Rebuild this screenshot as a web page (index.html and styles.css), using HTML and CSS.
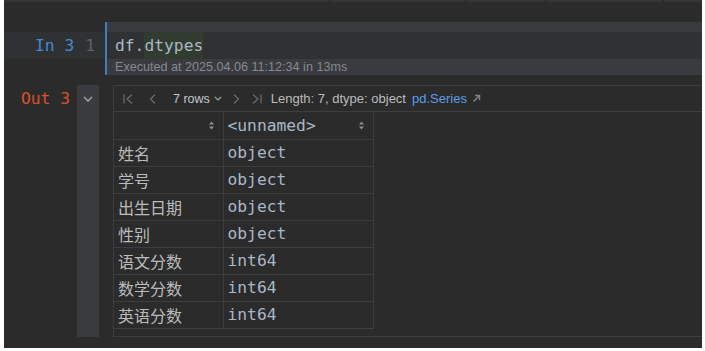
FILE: index.html
```html
<!DOCTYPE html>
<html lang="en">
<head>
    <meta charset="UTF-8">
    <title>df.dtypes</title>
    <link rel="stylesheet" href="styles.css">
</head>
<body>
<div class="frame">

    <!-- tail of the previous cell -->
    <div class="prev">
        <span class="seg" style="width: 326px"></span>
        <span class="seg" style="width: 136px"></span>
        <span class="seg" style="width: 80px"></span>
        <span class="seg" style="width: 118px"></span>
        <span class="seg last"></span>
    </div>

    <!-- input cell -->
    <div class="cell-in">
        <div class="gutter">
            <span class="prompt-in">In 3</span>
            <span class="line-no">1</span>
        </div>
        <div class="bar"></div>
        <div class="band"></div>
        <div class="code">df.<span class="hl">dtypes</span></div>
        <div class="exec">Executed at 2025.04.06 11:12:34 in 13ms</div>
    </div>

    <!-- output cell -->
    <div class="cell-out">
        <div class="prompt-out">Out 3</div>
        <div class="toggle">
            <svg width="10" height="6" viewBox="0 0 10 6"><path d="M1 1 L5 5 L9 1" fill="none" stroke="#a7a9ad" stroke-width="1.3"/></svg>
        </div>
        <div class="result">
            <div class="toolbar">
                <svg class="ico first" width="12" height="12" viewBox="0 0 12 12"><path d="M2 1.5 V10.5 M10 1.5 L5 6 L10 10.5" fill="none" stroke="#6a6d72" stroke-width="1.2"/></svg>
                <svg class="ico prev-p" width="12" height="12" viewBox="0 0 12 12"><path d="M8 1.5 L3.5 6 L8 10.5" fill="none" stroke="#6a6d72" stroke-width="1.2"/></svg>
                <span class="rows">7 rows
                    <svg width="8" height="5" viewBox="0 0 8 5"><path d="M0.8 0.8 L4 4 L7.2 0.8" fill="none" stroke="#a7a9ad" stroke-width="1.2"/></svg>
                </span>
                <svg class="ico next-p" width="12" height="12" viewBox="0 0 12 12"><path d="M4 1.5 L8.5 6 L4 10.5" fill="none" stroke="#6a6d72" stroke-width="1.2"/></svg>
                <svg class="ico last-p" width="12" height="12" viewBox="0 0 12 12"><path d="M2 1.5 L7 6 L2 10.5 M10 1.5 V10.5" fill="none" stroke="#6a6d72" stroke-width="1.2"/></svg>
                <span class="meta">Length: 7, dtype: object</span>
                <span class="link">pd.Series</span>
                <svg width="9" height="9" viewBox="0 0 9 9"><path d="M1.5 7.5 L7 2 M3 1.5 H7.5 V6" fill="none" stroke="#7c7f84" stroke-width="1.5"/></svg>
            </div>

            <table class="grid">
                <thead>
                    <tr>
                        <th class="idx">
                            <svg class="sort" width="5" height="9" viewBox="0 0 5 9"><path d="M0 3.5 L2.5 0.5 L5 3.5 Z M0 5.5 L2.5 8.5 L5 5.5 Z" fill="#8d9094"/></svg>
                        </th>
                        <th class="val">&lt;unnamed&gt;
                            <svg class="sort" width="5" height="9" viewBox="0 0 5 9"><path d="M0 3.5 L2.5 0.5 L5 3.5 Z M0 5.5 L2.5 8.5 L5 5.5 Z" fill="#8d9094"/></svg>
                        </th>
                    </tr>
                </thead>
                <tbody>
                    <tr><td class="idx">姓名</td><td class="val">object</td></tr>
                    <tr><td class="idx">学号</td><td class="val">object</td></tr>
                    <tr><td class="idx">出生日期</td><td class="val">object</td></tr>
                    <tr><td class="idx">性别</td><td class="val">object</td></tr>
                    <tr><td class="idx">语文分数</td><td class="val">int64</td></tr>
                    <tr><td class="idx">数学分数</td><td class="val">int64</td></tr>
                    <tr><td class="idx">英语分数</td><td class="val">int64</td></tr>
                </tbody>
            </table>
        </div>
    </div>

</div>
</body>
</html>
```

FILE: styles.css
```css
/* Darcula-ish notebook colours */
:root {
    --bg: #2b2b2b;
    --row: #303133;
    --band: #393b3f;
    --line: #3b3d40;
    --accent: #3e7fb6;
    --code: #a9b7c6;
    --text: #bbbbbb;
    --muted: #868a8e;
    --blue: #4a88d0;
    --red: #d9522b;
    --mono: "DejaVu Sans Mono", "Liberation Mono", monospace;
    --sans: "Liberation Sans", "Noto Sans", sans-serif;
    --cjk: "Noto Sans CJK SC", sans-serif;
}

* {
    margin: 0;
    padding: 0;
    box-sizing: border-box;
}

body {
    background: #ffffff;
    width: 705px;
    height: 351px;
    overflow: hidden;
}

.frame {
    margin: 0 3px 0 4px;
    height: 348px;
    background: var(--bg);
}

/* previous cell's bottom edge */
.prev {
    display: flex;
    height: 22px;
}

.prev .seg {
    height: 2px;
    background: #333436;
    border-right: 1px solid #262626;
}

.prev .seg.last {
    flex: 1;
    border-right: none;
}

/* Input cell */
.cell-in {
    display: grid;
    grid-template-columns: 101px 2px 1fr;
    grid-template-rows: 10px 27px 16px;
}

.gutter {
    grid-row: 2;
    grid-column: 1;
    background: var(--row);
    display: flex;
    align-items: center;
    font-family: var(--mono);
    font-size: 16.3px;
}

.prompt-in {
    color: var(--blue);
    margin-left: 31px;
}

.line-no {
    color: #5f6266;
    margin-left: 11px;
}

.bar {
    grid-row: 1 / 4;
    grid-column: 2;
    background: var(--accent);
}

.band {
    grid-row: 1;
    grid-column: 3;
    background: var(--band);
}

.code {
    grid-row: 2;
    grid-column: 3;
    background: var(--row);
    font-family: var(--mono);
    font-size: 16.3px;
    color: var(--code);
    padding-left: 8px;
    display: flex;
    align-items: stretch;
}

.code, .code .hl {
    line-height: 27px;
}

.code .hl {
    background: #323b30;
}

.exec {
    grid-row: 3;
    grid-column: 3;
    background: var(--band);
    font-family: var(--sans);
    font-size: 12.6px;
    line-height: 16px;
    color: var(--muted);
    padding-left: 8px;
}

/* Output cell */
.cell-out {
    display: flex;
    margin-top: 10px;
    height: 252px;
}

.prompt-out {
    width: 73px;
    font-family: var(--mono);
    font-size: 16.3px;
    color: var(--red);
    text-align: right;
    padding-right: 7px;
    line-height: 28px;
}

.toggle {
    width: 22px;
    background: #3a3b3e;
    display: flex;
    justify-content: center;
    padding-top: 11px;
}

.result {
    flex: 1;
    margin-left: 14px;
    border: 1px solid var(--line);
    border-right: none;
}

.toolbar {
    height: 26px;
    display: flex;
    align-items: center;
    padding-left: 8px;
    font-family: var(--sans);
    font-size: 13px;
    border-bottom: 1px solid var(--line);
}

.toolbar .prev-p {
    margin-left: 13px;
}

.rows {
    color: #c4c6c9;
    font-size: 12.5px;
    display: flex;
    align-items: center;
    gap: 4px;
    margin: 0 8px 0 14px;
}

.toolbar .last-p {
    margin: 0 8px 0 9px;
}

.meta {
    color: var(--text);
}

.link {
    color: #5c9ee8;
    margin: 0 5px 0 6px;
}

/* Series table */
.grid {
    border-collapse: collapse;
}

.grid th,
.grid td {
    height: 27px;
    text-align: left;
    font-weight: normal;
    padding: 0 0 0 4px;
    border-right: 1px solid var(--line);
    border-bottom: 1px solid var(--line);
    vertical-align: middle;
}

.grid .idx {
    width: 109px;
    font-family: var(--cjk);
    font-size: 16px;
    line-height: 24px;
    color: var(--text);
}

.grid .val {
    width: 150px;
    font-family: var(--mono);
    font-size: 16.3px;
    color: var(--code);
}

.grid th {
    position: relative;
    font-family: var(--mono);
    font-size: 16.3px;
    color: var(--code);
}

/* small up/down sort marker */
.sort {
    position: absolute;
    right: 9px;
    top: 9px;
}
```
